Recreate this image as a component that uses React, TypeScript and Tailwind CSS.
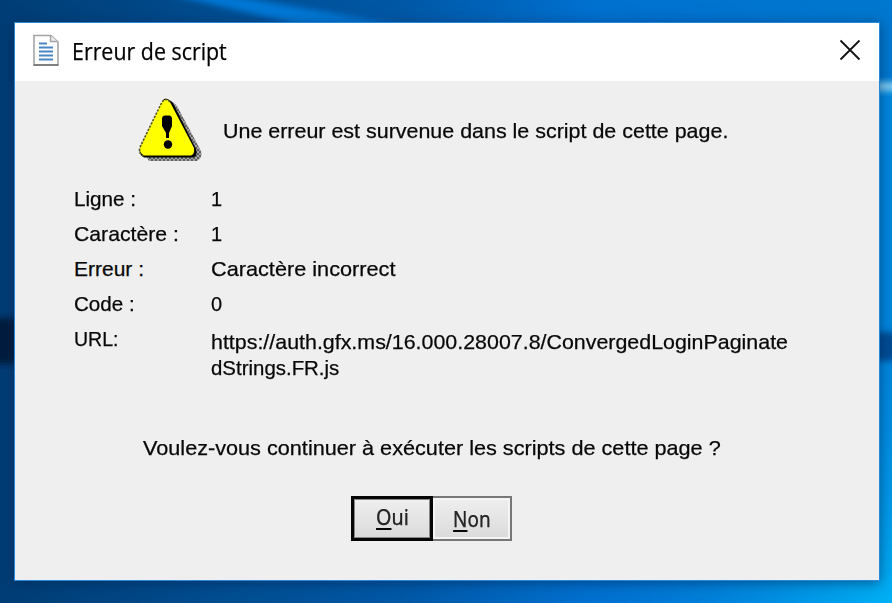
import type { ReactNode } from "react";

const details: { label: string; value: string; labelClass: string; valueClass: string }[] = [
  { label: "Ligne :", value: "1", labelClass: "scale-x-[0.985]", valueClass: "scale-x-[0.95]" },
  { label: "Caractère :", value: "1", labelClass: "scale-x-[1.01]", valueClass: "scale-x-[0.95]" },
  { label: "Erreur :", value: "Caractère incorrect", labelClass: "", valueClass: "scale-x-[1.033]" },
  { label: "Code :", value: "0", labelClass: "scale-x-[0.98]", valueClass: "scale-x-[0.95]" },
];

function Wallpaper() {
  return (
    <svg className="absolute inset-0" width="892" height="603" viewBox="0 0 892 603">
      <defs>
        <linearGradient id="sky">
          <stop offset="0" stopColor="#003d75" />
          <stop offset="0.22" stopColor="#004b8d" />
          <stop offset="0.45" stopColor="#0058a6" />
          <stop offset="0.66" stopColor="#0070cf" />
          <stop offset="1" stopColor="#0078cf" />
        </linearGradient>
        <radialGradient id="glow" cx="892" cy="603" r="300" gradientUnits="userSpaceOnUse">
          <stop offset="0" stopColor="#00b0f5" />
          <stop offset="1" stopColor="#0084e0" stopOpacity="0" />
        </radialGradient>
        <filter id="soft" x="-30%" y="-50%" width="160%" height="200%">
          <feGaussianBlur stdDeviation="3" />
        </filter>
      </defs>
      <rect width="892" height="603" fill="url(#sky)" />
      <rect x="876" y="90" width="16" height="500" fill="#0086dd" />
      <rect y="330" x="600" width="292" height="273" fill="url(#glow)" />
      <path d="M160 -8H210L440 32H330Z" fill="#0078d6" filter="url(#soft)" />
      <rect x="-10" y="318" width="40" height="46" fill="#001b3c" filter="url(#soft)" />
      <rect x="870" y="332" width="40" height="29" fill="#004c93" filter="url(#soft)" />
      <rect x="870" y="82" width="40" height="9" fill="#83d0f3" filter="url(#soft)" />
    </svg>
  );
}

function DocumentIcon() {
  return (
    <svg width="28" height="34" viewBox="0 0 28 34" fill="none">
      <path d="M2 2.5H19L26 9V32H2Z" fill="#fdfdfd" stroke="#a5a5a5" strokeWidth="1.6" />
      <path d="M1.5 32H26.5" stroke="#7f7f7f" strokeWidth="2" />
      <path d="M18.5 2.5V8.5H25.5" fill="#ededed" stroke="#a5a5a5" strokeWidth="1.4" />
      <path d="M7 10.5H15M7 14.5H21M7 18.5H21M7 22.5H21M7 26.5H21" stroke="#4a86c5" strokeWidth="1.8" />
    </svg>
  );
}

function WarningIcon() {
  return (
    <svg width="66" height="66" viewBox="0 0 66 66">
      <defs>
        <pattern id="dither" width="4" height="4" patternUnits="userSpaceOnUse">
          <rect width="4" height="4" fill="#a2a2a2" />
          <rect width="2" height="2" fill="#606060" />
          <rect x="2" y="2" width="2" height="2" fill="#606060" />
        </pattern>
      </defs>
      <path d="M30 4Q35 3 40 9L64 54Q66 61 60 64H12L8 58Z" fill="url(#dither)" />
      <path d="M27 2Q31 1 36 6L59 52Q61 59 56 60.5H7Q1 57 3 51Z" fill="#000" />
      <path d="M25 5Q29 0 33 5L57 51Q58 57 54 58.5H7Q2 56 3 51Z" fill="#ffff00" />
      <path d="M33 5Q29 0 25 5L3 50Q1 57 7 59" fill="none" stroke="#56561a" strokeWidth="1.6" strokeDasharray="2.2 1.4" />
      <path d="M25 22Q25 18.5 28 18.5H32Q35 18.5 35 22V29L32 36V41H29V36L25 29Z" fill="#000" />
      <circle cx="31" cy="47.5" r="4.2" fill="#000" />
    </svg>
  );
}

function Line({ children, className = "" }: { children: ReactNode; className?: string }) {
  return <span className={`block w-max origin-left whitespace-nowrap ${className}`}>{children}</span>;
}

export default function App() {
  return (
    <main className="relative h-[603px] w-[892px] overflow-hidden pt-[22px] pl-[14px] font-['Liberation_Sans',Arial,sans-serif] text-[21px] text-[#080808]">
      <Wallpaper />
      <section className="relative flex h-[559px] w-[866px] flex-col border border-[#2688dc] bg-[#efefef] shadow-[0_2px_12px_#00204788] [-webkit-text-stroke:0.25px_#080808]">
        <header className="flex h-[58px] shrink-0 items-start bg-white pt-[10px] pr-[18px] pl-[17px]">
          <DocumentIcon />
          <h1 className="ml-3 grow font-['Open_Sans',sans-serif] text-[23px] leading-[36px] text-black">
            <Line className="scale-x-[0.93]">Erreur de script</Line>
          </h1>
          <button aria-label="Fermer" className="mt-[6px]">
            <svg width="22" height="22" viewBox="0 0 22 22" stroke="#111" strokeWidth="1.8">
              <path d="M1.5 1.5L20.5 20.5M20.5 1.5L1.5 20.5" />
            </svg>
          </button>
        </header>

        <div className="flex h-[100px] shrink-0 items-start pt-[16px] pl-[122px]">
          <WarningIcon />
          <p className="ml-5 pt-[22px] leading-6">
            <Line className="scale-x-[1.021]">Une erreur est survenue dans le script de cette page.</Line>
          </p>
        </div>

        <dl className="grid h-[245px] shrink-0 grid-cols-[137px_1fr] grid-rows-[35px_35px_35px_35px_1fr] pt-[6px] pl-[59px] leading-6">
          {details.map((row) => (
            <div key={row.label} className="contents">
              <dt><Line className={row.labelClass}>{row.label}</Line></dt>
              <dd><Line className={row.valueClass}>{row.value}</Line></dd>
            </div>
          ))}
          <dt><Line className="scale-x-[0.93]">URL:</Line></dt>
          <dd className="pt-[2px] leading-[26px]">
            <Line className="scale-x-[1.019]">https://auth.gfx.ms/16.000.28007.8/ConvergedLoginPaginate</Line>
            <Line className="scale-x-[0.973]">dStrings.FR.js</Line>
          </dd>
        </dl>

        <p className="flex h-[70px] shrink-0 pt-[10px] pl-[128px] leading-6">
          <Line className="scale-x-[1.031]">Voulez-vous continuer à exécuter les scripts de cette page ?</Line>
        </p>

        <div className="flex pl-[336px] font-['Noto_Sans',sans-serif] text-[#252525]">
          <button className="flex h-[45px] w-[82px] justify-center border-[3px] border-[#050505] bg-linear-to-b from-[#efefef] to-[#dadada] pt-[4px] leading-7 shadow-[inset_0_0_0_1px_#888]">
            <span className="scale-x-[0.94]"><span className="underline decoration-2 underline-offset-[3px]">O</span>ui</span>
          </button>
          <button className="flex h-[45px] w-[79px] justify-center border-2 border-l-0 border-[#777] bg-linear-to-b from-[#efefef] to-[#dadada] pt-[7px] leading-7 shadow-[inset_0_0_0_2px_#f5f5f5]">
            <span className="scale-x-[0.9]"><span className="underline decoration-2 underline-offset-[3px]">N</span>on</span>
          </button>
        </div>
      </section>
    </main>
  );
}
